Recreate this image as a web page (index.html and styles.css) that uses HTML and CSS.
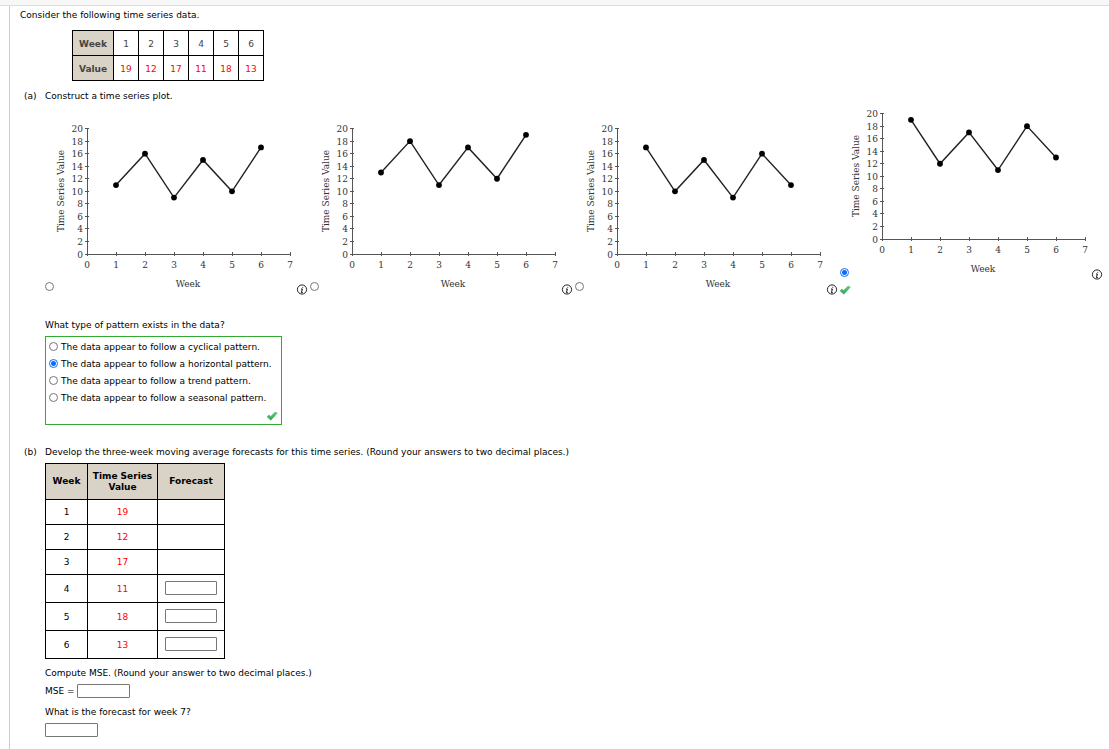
FILE: index.html
```html
<!DOCTYPE html>
<html lang="en">
<head>
<meta charset="utf-8">
<title>Time Series Data</title>
<link rel="stylesheet" href="styles.css">
</head>
<body>
<div class="topbar"></div>
<svg class="defs" aria-hidden="true">
  <defs>
    <linearGradient id="green" x1="0" y1="0" x2="0" y2="1"><stop offset="0" stop-color="#63d080"/><stop offset="1" stop-color="#2fa04c"/></linearGradient>
    <symbol id="tick" viewBox="0 0 12 10"><path d="M1 5.8 3 4 4.7 5.5 9.2 1 11.2 2.2 4.9 9.2Z" fill="url(#green)" stroke="#45b564" stroke-width=".6" stroke-linejoin="round"/></symbol>
    <symbol id="info" viewBox="0 0 12 12"><circle cx="6" cy="6.5" r="4.6" fill="#fff" stroke="#222" stroke-width="1"/><path d="M5 6H6.4L5.4 9.6H6.8" fill="none" stroke="#111" stroke-width="1"/><circle cx="6.8" cy="4.2" r=".5" fill="#111"/></symbol>
  </defs>
</svg>
<main class="problem">
  <p class="intro">Consider the following time series data.</p>
  <table class="grid data">
    <tr><th scope="row">Week</th><td>1</td><td>2</td><td>3</td><td>4</td><td>5</td><td>6</td></tr>
    <tr class="red"><th scope="row">Value</th><td>19</td><td>12</td><td>17</td><td>11</td><td>18</td><td>13</td></tr>
  </table>

  <section class="part part-a">
    <span class="letter">(a)</span>
    <div class="body">
      <p>Construct a time series plot.</p>
      <div class="choices">
        <div class="choice">
          <div class="pick"><input type="radio" name="plot" aria-label="Plot 1"></div>
          <svg class="chart" data-values="11,16,9,15,10,17"></svg>
          <button class="info" aria-label="About plot 1"><svg><use href="#info"/></svg></button>
        </div>
        <div class="choice">
          <div class="pick"><input type="radio" name="plot" aria-label="Plot 2"></div>
          <svg class="chart" data-values="13,18,11,17,12,19"></svg>
          <button class="info" aria-label="About plot 2"><svg><use href="#info"/></svg></button>
        </div>
        <div class="choice">
          <div class="pick"><input type="radio" name="plot" aria-label="Plot 3"></div>
          <svg class="chart" data-values="17,10,15,9,16,11"></svg>
          <button class="info" aria-label="About plot 3"><svg><use href="#info"/></svg></button>
        </div>
        <div class="choice chosen">
          <div class="pick"><input type="radio" name="plot" aria-label="Plot 4" checked><svg class="tick"><use href="#tick"/></svg></div>
          <svg class="chart" data-values="19,12,17,11,18,13"></svg>
          <button class="info" aria-label="About plot 4"><svg><use href="#info"/></svg></button>
        </div>
      </div>
      <p class="question">What type of pattern exists in the data?</p>
      <div class="answers">
        <label><input type="radio" name="pattern">The data appear to follow a cyclical pattern.</label>
        <label><input type="radio" name="pattern" checked>The data appear to follow a horizontal pattern.</label>
        <label><input type="radio" name="pattern">The data appear to follow a trend pattern.</label>
        <label><input type="radio" name="pattern">The data appear to follow a seasonal pattern.</label>
        <svg class="tick"><use href="#tick"/></svg>
      </div>
    </div>
  </section>

  <section class="part part-b">
    <span class="letter">(b)</span>
    <div class="body">
      <p>Develop the three-week moving average forecasts for this time series. (Round your answers to two decimal places.)</p>
      <table class="grid forecast">
        <thead><tr><th scope="col">Week</th><th scope="col">Time Series<br>Value</th><th scope="col">Forecast</th></tr></thead>
        <tbody>
          <tr><td>1</td><td class="red">19</td><td></td></tr>
          <tr><td>2</td><td class="red">12</td><td></td></tr>
          <tr><td>3</td><td class="red">17</td><td></td></tr>
          <tr class="entry"><td>4</td><td class="red">11</td><td><input type="text" aria-label="Forecast for week 4"></td></tr>
          <tr class="entry"><td>5</td><td class="red">18</td><td><input type="text" aria-label="Forecast for week 5"></td></tr>
          <tr class="entry"><td>6</td><td class="red">13</td><td><input type="text" aria-label="Forecast for week 6"></td></tr>
        </tbody>
      </table>
      <p class="prompt">Compute MSE. (Round your answer to two decimal places.)</p>
      <div class="field"><label for="mse">MSE =</label><input type="text" id="mse"></div>
      <p class="prompt"><label for="week7">What is the forecast for week 7?</label></p>
      <div class="field"><input type="text" id="week7"></div>
    </div>
  </section>
</main>
<script src="charts.js"></script>
</body>
</html>
```
FILE: styles.css
```css
* { box-sizing: border-box; }
body {
  margin: 0;
  background: #fff;
  color: #000;
  font: 9px/12px Verdana, "DejaVu Sans", sans-serif;
  display: flex;
  flex-direction: column;
  min-height: 100vh;
}
p { margin: 0; }
.defs { position: absolute; width: 0; height: 0; }
.topbar { height: 6px; background: #f7f7f7; border-bottom: 1px solid #ddd; }
.problem {
  flex: 1;
  margin-left: 9px;
  border-left: 1px solid #ccc;
  padding: 3px 0 12px 10px;
}

.grid { border-collapse: collapse; text-align: center; }
.grid th, .grid td { border: 1px solid #000; padding: 0; height: 25px; }
.grid th { background: #d9d2c6; font-weight: bold; }
.grid .red, .grid .red td { color: #f00; }
.data { margin: 9px 0 0 52px; color: #444; }
.grid.data th, .grid.data td { padding-top: 2px; }
.data th { width: 41px; color: #444; }
.data td { width: 25px; }

.part { display: flex; padding-left: 4px; }
.part-a { margin-top: 9px; }
.part-b { margin-top: 21px; }
.letter { width: 21px; flex: none; }
.body { flex: 1; min-width: 0; }

input[type="radio"] {
  appearance: none;
  flex: none;
  width: 9px;
  height: 9px;
  margin: 0;
  border: 1px solid #767676;
  border-radius: 50%;
  background: #fff;
}
input[type="radio"]:checked {
  border-color: #0a6cff;
  background: radial-gradient(circle, #0a6cff 0 2px, #fff 3px);
}
input[type="text"] {
  width: 53px;
  height: 14px;
  margin: 0;
  padding: 0 2px;
  border: 1px solid #767676;
  border-radius: 1px;
  background: #fff;
  font: inherit;
}

.tick { width: 12px; height: 10px; flex: none; }
.choices { display: flex; flex-wrap: wrap; align-items: flex-end; margin-top: 2px; }
.choice { display: flex; align-items: flex-end; width: 265px; }
.pick { width: 9px; padding-bottom: 4px; display: flex; flex-direction: column; gap: 8px; }
.chart { width: 240px; height: 176px; flex: none; }
.info { border: 0; padding: 0; margin-left: 2px; background: none; width: 12px; height: 12px; }
.info svg { display: block; width: 12px; height: 12px; }
.chosen .pick { padding-bottom: 0; }
.chosen .pick .tick { margin-left: -1px; }
.chosen .chart, .chosen .info { margin-bottom: 15px; }

.chart text { font: 9px "DejaVu Serif", serif; fill: #333; }
.chart .caption { text-anchor: middle; }
.chart .x { text-anchor: middle; }
.chart .y { text-anchor: end; }
.chart .axis { stroke: #555; fill: none; }
.chart .series { stroke: #222; stroke-width: 1.4; fill: none; }

.question { margin-top: 24px; }
.answers {
  width: max-content;
  max-width: 100%;
  min-width: 237px;
  margin-top: 5px;
  padding: 1px 3px 3px;
  border: 1px solid #3a3;
  display: flex;
  flex-direction: column;
}
.answers label { display: flex; align-items: center; gap: 3px; height: 17px; }
.answers .tick { align-self: flex-end; margin-top: 5px; }

.forecast { margin-top: 5px; }
.forecast th { height: 36px; line-height: 11px; }
.forecast th:nth-child(1) { width: 42px; }
.forecast th:nth-child(2) { width: 70px; }
.forecast th:nth-child(3) { width: 67px; }
.forecast .entry td { height: 28px; }
.forecast .entry td:last-child { padding-bottom: 2px; }
.forecast input[type="text"] { display: block; width: 52px; margin: 0 auto; }
.prompt { margin-top: 8px; }
.field { display: flex; align-items: center; gap: 2px; margin-top: 5px; }
```
FILE: charts.js
```js
const LEFT = 33, BASE = 135, STEP_X = 29, STEP_Y = 6.27;

function draw(svg) {
  const values = svg.dataset.values.split(",").map(Number);
  const px = (week) => LEFT + week * STEP_X;
  const py = (value) => BASE - value * STEP_Y;
  let axis = `M${LEFT + 0.5} ${py(20)}V${BASE + 0.5}H${px(7)}`;
  let out = "";
  for (let v = 0; v <= 20; v += 2) {
    const y = Math.floor(py(v));
    axis += `M${LEFT - 2} ${y + 0.5}h4`;
    out += `<text class="y" x="${LEFT - 4}" y="${y + 4}">${v}</text>`;
  }
  for (let w = 0; w <= 7; w++) {
    axis += `M${px(w) + 0.5} ${BASE - 2}v4`;
    out += `<text class="x" x="${px(w)}" y="${BASE + 14}">${w}</text>`;
  }
  out += `<text class="caption" x="134" y="168">Week</text>`;
  out += `<text class="caption" transform="translate(10 72) rotate(-90)">Time Series Value</text>`;
  out += `<path class="axis" d="${axis}"/>`;
  const points = values.map((v, i) => [px(i + 1), py(v)]);
  out += `<polyline class="series" points="${points.join(" ")}"/>`;
  out += points.map(([x, y]) => `<circle cx="${x}" cy="${y}" r="2.9"/>`).join("");
  svg.setAttribute("viewBox", "0 0 240 176");
  svg.innerHTML = out;
}

document.querySelectorAll(".chart").forEach(draw);
```
